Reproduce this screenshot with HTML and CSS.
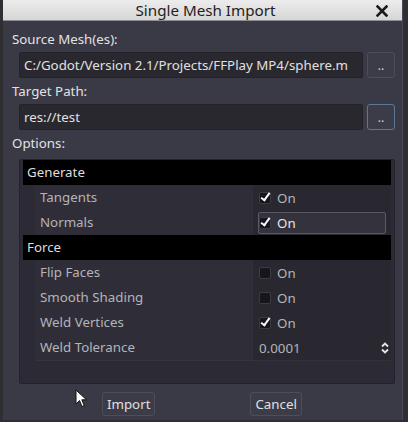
FILE: index.html
```html
<!DOCTYPE html>
<html lang="en">
<head>
    <meta charset="UTF-8">
    <title>Single Mesh Import</title>
    <link rel="stylesheet" href="styles.css">
</head>
<body>
    <div class="dialog">
        <div class="titlebar">
            <span class="title">Single Mesh Import</span>
            <svg class="close" width="12" height="12" viewBox="0 0 12 12">
                <path d="M1.5 1.5 L10.5 10.5 M10.5 1.5 L1.5 10.5" stroke="#1b1b1b" stroke-width="2.6" stroke-linecap="square"/>
            </svg>
        </div>
        <div class="content">
            <div class="label">Source Mesh(es):</div>
            <div class="pathRow">
                <div class="lineEdit">C:/Godot/Version 2.1/Projects/FFPlay MP4/sphere.m</div>
                <div class="browse">..</div>
            </div>
            <div class="label">Target Path:</div>
            <div class="pathRow">
                <div class="lineEdit">res://test</div>
                <div class="browse hover">..</div>
            </div>
            <div class="label options">Options:</div>
            <div class="tree">
                <div class="category">Generate</div>
                <div class="prop">
                    <div class="name">Tangents</div>
                    <div class="value"><span class="check on"></span>On</div>
                </div>
                <div class="prop">
                    <div class="name">Normals</div>
                    <div class="value"><div class="editing"><span class="check on"></span>On</div></div>
                </div>
                <div class="category">Force</div>
                <div class="prop">
                    <div class="name">Flip Faces</div>
                    <div class="value"><span class="check"></span>On</div>
                </div>
                <div class="prop">
                    <div class="name">Smooth Shading</div>
                    <div class="value"><span class="check"></span>On</div>
                </div>
                <div class="prop">
                    <div class="name">Weld Vertices</div>
                    <div class="value"><span class="check on"></span>On</div>
                </div>
                <div class="prop">
                    <div class="name">Weld Tolerance</div>
                    <div class="value spin">0.0001
                        <svg class="spinner" width="8" height="12" viewBox="0 0 8 12">
                            <path d="M1 4.5 L4 1.5 L7 4.5 M1 7.5 L4 10.5 L7 7.5" fill="none" stroke="#e6e6e6" stroke-width="1.8"/>
                        </svg>
                    </div>
                </div>
            </div>
            <div class="actions">
                <div class="btn">Import</div>
                <div class="btn">Cancel</div>
            </div>
        </div>
    </div>
    <svg class="cursor" width="14" height="20" viewBox="0 0 14 20">
        <path d="M1 1 L1 15 L4.5 11.5 L7 17.5 L9.2 16.6 L6.8 10.8 L11.5 10.8 Z" fill="#fff" stroke="#111" stroke-width="1"/>
    </svg>
</body>
</html>
```

FILE: styles.css
```css
body{
    margin: 0;
    width: 408px;
    height: 422px;
    background-color: #2f2f33;
    font-family: "Noto Sans", "Open Sans", sans-serif;
    font-size: 13.3px;
    color: #e2e2e2;
    overflow: hidden;
    position: relative;
}

.dialog{
    margin-left: 3px;
    width: 400px;
    height: 420px;
    background-color: #3a3946;
    border-right: 1px solid #4a4956;
    box-sizing: border-box;
    display: flex;
    flex-direction: column;
}

.titlebar{
    height: 21px;
    background: linear-gradient(#ececec, #d6d6d6);
    border-bottom: 1px solid #8e8e94;
    box-sizing: border-box;
    display: flex;
    align-items: center;
    justify-content: center;
    position: relative;
}
.titlebar .title{
    font-size: 15.2px;
    color: #1e1e1e;
    margin-left: 6px;
}
.titlebar .close{
    position: absolute;
    right: 14px;
    top: 5px;
}

.content{
    flex: 1;
    display: flex;
    flex-direction: column;
    padding: 6px 7px 0 9px;
}

.label{
    height: 25px;
    line-height: 25px;
}
.label.options{
    height: 28px;
}

.pathRow{
    display: flex;
    gap: 4px;
    margin-left: 7px;
    height: 26px;
    margin-bottom: 1px;
}
.lineEdit{
    flex: 1;
    background-color: #29282f;
    border: 1px solid #23222a;
    border-radius: 2px;
    padding: 0 4px;
    line-height: 24px;
    white-space: nowrap;
    overflow: hidden;
    color: #e0e0e0;
}
.browse{
    width: 28px;
    box-sizing: border-box;
    background-color: #3c3b48;
    border: 1px solid #4e4d5a;
    border-radius: 3px;
    text-align: center;
    line-height: 26px;
    font-size: 12px;
    color: #d8d8d8;
}
.browse.hover{
    border-color: #5c7894;
}

.tree{
    margin-left: 7px;
    height: 225px;
    box-sizing: border-box;
    background-color: #2c2b35;
    border: 1px solid #24232b;
    border-radius: 2px;
    padding: 0 3px;
    display: flex;
    flex-direction: column;
}

.category{
    height: 25px;
    flex-shrink: 0;
    line-height: 25px;
    background-color: #000;
    padding-left: 4px;
    color: #dedede;
}

.prop{
    height: 25px;
    flex-shrink: 0;
    display: grid;
    grid-template-columns: 218px 1fr;
    margin-left: 12px;
    color: #b4b4b8;
}
.prop .name{
    background-color: #2f2e38;
    border-bottom: 1px solid #34333e;
    padding-left: 5px;
    line-height: 25px;
}
.prop .value{
    background-color: #292830;
    border-bottom: 1px solid #33323c;
    display: flex;
    align-items: center;
    padding-left: 6px;
}
.value .editing{
    width: 126px;
    height: 20px;
    margin-top: 1px;
    border: 1px solid #5a5966;
    border-radius: 2px;
    background-color: #33323d;
    display: flex;
    align-items: center;
    color: #e6e6e6;
    margin-left: -1px;
}
.value.spin{
    justify-content: space-between;
    padding-right: 2px;
}

.check{
    width: 12px;
    height: 12px;
    box-sizing: border-box;
    border-radius: 2px;
    background-color: #17161c;
    border: 1px solid #3c3b45;
    margin-right: 6px;
    position: relative;
}
.check.on::after{
    content: "";
    position: absolute;
    left: 3px;
    top: -2px;
    width: 3px;
    height: 8px;
    border: solid #fafafa;
    border-width: 0 2.5px 2.5px 0;
    transform: rotate(36deg);
}

.actions{
    display: flex;
    margin-top: 8px;
    padding-left: 90px;
    gap: 95px;
}
.btn{
    height: 22px;
    line-height: 22px;
    padding: 0 4px;
    background-color: #3c3b48;
    border: 1px solid #4e4d5a;
    border-radius: 3px;
    color: #e0e0e0;
}

.cursor{
    position: absolute;
    left: 75px;
    top: 389px;
}
```
